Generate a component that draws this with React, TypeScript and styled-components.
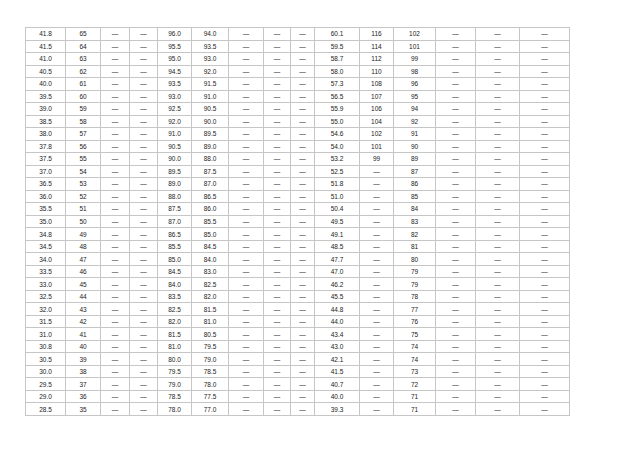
import React from 'react';
import styled, { createGlobalStyle } from 'styled-components';

const GlobalStyle = createGlobalStyle`
  html, body {
    margin: 0;
    padding: 0;
    background: #ffffff;
  }
  body {
    font-family: 'Liberation Sans', Arial, sans-serif;
  }
`;

const Page = styled.div`
  padding: 27px 0 0 25px;
`;

const Table = styled.table`
  width: 544px;
  height: 389px;
  table-layout: fixed;
  border-collapse: collapse;
  font-size: 6.5px;
  color: #222222;
`;

const Cell = styled.td`
  border: 1px solid #c6c6c6;
  padding: 0;
  text-align: center;
  line-height: 7px;
  white-space: nowrap;
`;

const DASH = '—';

// column widths read off the picture
const widths = [40, 35, 29, 28, 34, 37, 35, 27, 24, 45, 34, 42, 40, 44, 50];

// [c1, c2, c5, c6, c10, c11, c12]; every other column is a dash
const rows: string[][] = [
  ['41.8', '65', '96.0', '94.0', '60.1', '116', '102'],
  ['41.5', '64', '95.5', '93.5', '59.5', '114', '101'],
  ['41.0', '63', '95.0', '93.0', '58.7', '112', '99'],
  ['40.5', '62', '94.5', '92.0', '58.0', '110', '98'],
  ['40.0', '61', '93.5', '91.5', '57.3', '108', '96'],
  ['39.5', '60', '93.0', '91.0', '56.5', '107', '95'],
  ['39.0', '59', '92.5', '90.5', '55.9', '106', '94'],
  ['38.5', '58', '92.0', '90.0', '55.0', '104', '92'],
  ['38.0', '57', '91.0', '89.5', '54.6', '102', '91'],
  ['37.8', '56', '90.5', '89.0', '54.0', '101', '90'],
  ['37.5', '55', '90.0', '88.0', '53.2', '99', '89'],
  ['37.0', '54', '89.5', '87.5', '52.5', DASH, '87'],
  ['36.5', '53', '89.0', '87.0', '51.8', DASH, '86'],
  ['36.0', '52', '88.0', '86.5', '51.0', DASH, '85'],
  ['35.5', '51', '87.5', '86.0', '50.4', DASH, '84'],
  ['35.0', '50', '87.0', '85.5', '49.5', DASH, '83'],
  ['34.8', '49', '86.5', '85.0', '49.1', DASH, '82'],
  ['34.5', '48', '85.5', '84.5', '48.5', DASH, '81'],
  ['34.0', '47', '85.0', '84.0', '47.7', DASH, '80'],
  ['33.5', '46', '84.5', '83.0', '47.0', DASH, '79'],
  ['33.0', '45', '84.0', '82.5', '46.2', DASH, '79'],
  ['32.5', '44', '83.5', '82.0', '45.5', DASH, '78'],
  ['32.0', '43', '82.5', '81.5', '44.8', DASH, '77'],
  ['31.5', '42', '82.0', '81.0', '44.0', DASH, '76'],
  ['31.0', '41', '81.5', '80.5', '43.4', DASH, '75'],
  ['30.8', '40', '81.0', '79.5', '43.0', DASH, '74'],
  ['30.5', '39', '80.0', '79.0', '42.1', DASH, '74'],
  ['30.0', '38', '79.5', '78.5', '41.5', DASH, '73'],
  ['29.5', '37', '79.0', '78.0', '40.7', DASH, '72'],
  ['29.0', '36', '78.5', '77.5', '40.0', DASH, '71'],
  ['28.5', '35', '78.0', '77.0', '39.3', DASH, '71'],
];

const expand = (r: string[]) => [
  r[0], r[1], DASH, DASH, r[2], r[3], DASH, DASH, DASH, r[4], r[5], r[6], DASH, DASH, DASH,
];

const App = () => (
  <>
    <GlobalStyle />
    <Page>
      <Table>
        <colgroup>
          {widths.map((w, i) => (
            <col key={i} style={{ width: w }} />
          ))}
        </colgroup>
        <tbody>
          {rows.map((r, i) => (
            <tr key={i}>
              {expand(r).map((v, j) => (
                <Cell key={j}>{v}</Cell>
              ))}
            </tr>
          ))}
        </tbody>
      </Table>
    </Page>
  </>
);

export default App;
